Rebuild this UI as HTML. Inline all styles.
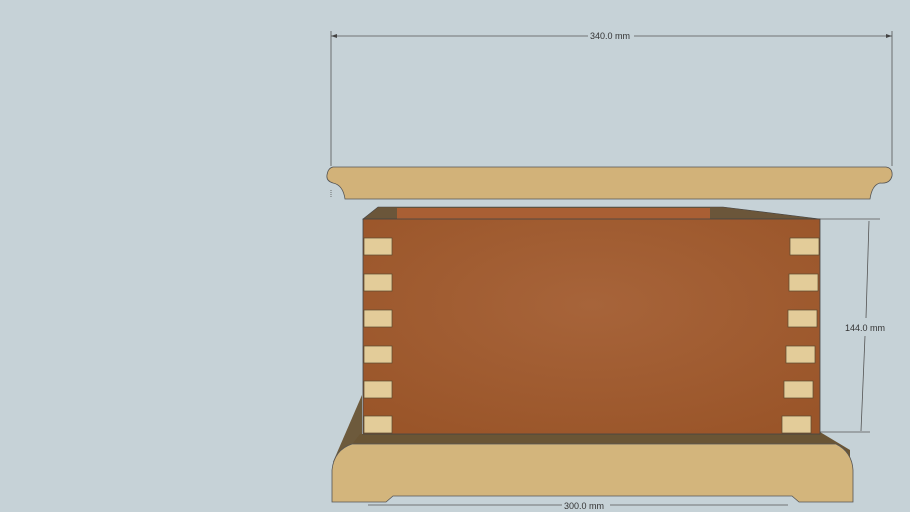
<!DOCTYPE html>
<html><head><style>
html,body{margin:0;padding:0;width:910px;height:512px;overflow:hidden;background:#c6d2d7}
text{font-family:"Liberation Sans",sans-serif;font-size:9px;fill:#333}
</style></head><body>
<svg width="910" height="512" viewBox="0 0 910 512" xmlns="http://www.w3.org/2000/svg">
<defs>
<radialGradient id="ch" cx="50%" cy="40%" r="70%">
<stop offset="0" stop-color="#a7643a"/><stop offset="1" stop-color="#9a5529"/>
</radialGradient>
</defs>
<!-- top dimension -->
<g stroke="#555" stroke-width="0.8" fill="none">
<line x1="331" y1="31" x2="331" y2="166"/><line x1="892" y1="31" x2="892" y2="166"/>
<line x1="331" y1="36" x2="588" y2="36"/><line x1="634" y1="36" x2="892" y2="36"/>
<line x1="820" y1="219" x2="880" y2="219"/><line x1="820" y1="432" x2="870" y2="432"/>
<line x1="869" y1="221" x2="866" y2="318"/><line x1="865" y1="336" x2="861" y2="431"/>
<line x1="368" y1="505" x2="562" y2="505"/><line x1="610" y1="505" x2="788" y2="505"/>
<line x1="331" y1="190" x2="331" y2="198" stroke-dasharray="1,1"/>
</g>
<polygon points="331,36 337,34 337,38" fill="#444"/><polygon points="892,36 886,34 886,38" fill="#444"/>
<text x="590" y="39">340.0 mm</text>
<text x="845" y="331">144.0 mm</text>
<text x="564" y="509">300.0 mm</text>
<!-- lid -->
<path d="M333,167 L886,167 Q893,168 892,176 Q890,184 880,183 Q872,185 870,199 L345,199 Q343,185 333,183 Q326,181 327,175 Q328,168 333,167 Z" fill="#d2b279" stroke="#555" stroke-width="0.8"/>
<!-- base side -->
<path d="M362,395 L333,462 L345,462 L362,436 Z" fill="#6d5a3c"/>
<path d="M360,434 L820,432 L850,450 L850,460 L340,460 Z" fill="#6a5535"/>
<!-- base front -->
<path d="M352,444 L836,444 Q852,452 853,470 L853,502 L799,502 L792,496 L393,496 L386,502 L332,502 L332,470 Q334,450 352,444 Z" fill="#d3b57c" stroke="#555" stroke-width="0.8"/>
<!-- box top -->
<polygon points="363,219 378,207 723,207 820,219" fill="#6b563a" stroke="#444" stroke-width="0.6"/>
<polygon points="397,208 710,208 710,219 397,219" fill="#a95f34"/>
<!-- box front -->
<rect x="363" y="219" width="457" height="215" fill="url(#ch)" stroke="#444" stroke-width="0.8"/>
<g fill="#e3cc99" stroke="#5a4a30" stroke-width="0.7">
<rect x="364" y="238" width="28" height="17"/><rect x="364" y="274" width="28" height="17"/>
<rect x="364" y="310" width="28" height="17"/><rect x="364" y="346" width="28" height="17"/>
<rect x="364" y="381" width="28" height="17"/><rect x="364" y="416" width="28" height="17"/>
<rect x="790" y="238" width="29" height="17"/><rect x="789" y="274" width="29" height="17"/>
<rect x="788" y="310" width="29" height="17"/><rect x="786" y="346" width="29" height="17"/>
<rect x="784" y="381" width="29" height="17"/><rect x="782" y="416" width="29" height="17"/>
</g>
</svg>
</body></html>
